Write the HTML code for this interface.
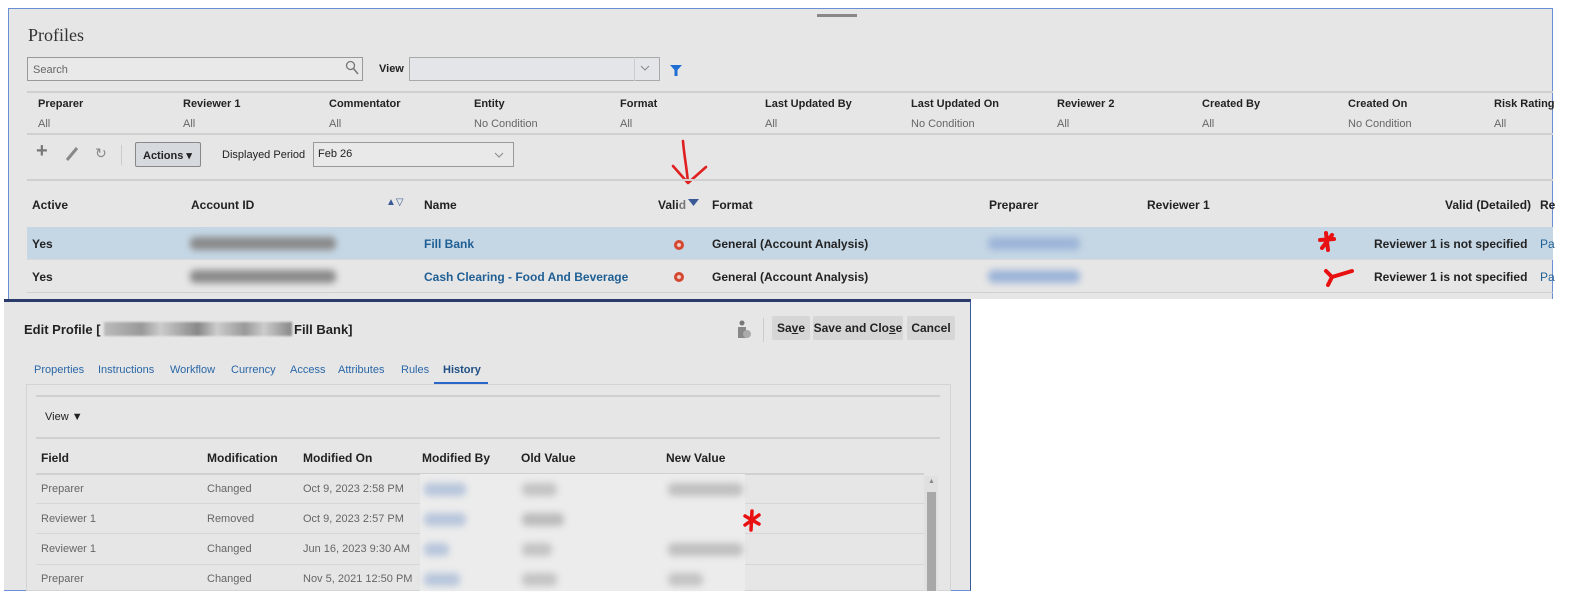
<!DOCTYPE html>
<html><head><meta charset="utf-8"><style>
*{margin:0;padding:0;box-sizing:border-box}
body{width:1573px;height:601px;background:#fff;position:relative;overflow:hidden;font-family:"Liberation Sans",sans-serif;font-size:12px;color:#222}
.a{position:absolute;white-space:nowrap}
.b{font-weight:bold;color:#222}
.g{color:#666;font-size:11px}
.lk{color:#1f5f94;font-weight:bold}
.blur{position:absolute;height:13px;border-radius:5px;filter:blur(3.5px)}
.hl{position:absolute;height:2px;background:#d0d0d0}
.btn{position:absolute;background:#d6d6d6;border-radius:2px;font-weight:bold;font-size:12px;text-align:center;line-height:24px;color:#222}
.err{position:absolute;width:10px;height:10px;border-radius:50%;background:radial-gradient(circle,#f4d0c8 0 1.5px,#d4462f 2.5px)}
</style></head><body>
<div class="a" style="left:8px;top:8px;width:1545px;height:291px;background:#e6e6e6;border:1px solid #6b8fd6;border-bottom:none"></div>
<div class="a" style="left:817px;top:14px;width:40px;height:3px;background:#888"></div>
<div class="a" style="left:28px;top:25px;font-family:'Liberation Serif',serif;font-size:18px;color:#333">Profiles</div>
<div class="a" style="left:27px;top:57px;width:336px;height:24px;border:1px solid #999;background:#e9e9e9"></div>
<div class="a g" style="left:33px;top:64px;font-size:11px">Search</div>
<svg class="a" style="left:345px;top:60px" width="14" height="16"><circle cx="5.5" cy="5.5" r="4" fill="none" stroke="#777" stroke-width="1.3"/><line x1="8.5" y1="8.5" x2="13" y2="14" stroke="#777" stroke-width="1.5"/></svg>
<div class="a b" style="left:379px;top:63px;font-size:11px">View</div>
<div class="a" style="left:409px;top:57px;width:251px;height:24px;border:1px solid #aaa;background:#e3e5e8"></div>
<div class="a" style="left:634px;top:57px;width:1px;height:24px;background:#ccc"></div>
<svg class="a" style="left:640px;top:65px" width="10" height="7"><path d="M1 1L5 5L9 1" fill="none" stroke="#888"/></svg>
<svg class="a" style="left:669px;top:64px" width="14" height="13"><path d="M1 1H13L8.5 6V12H5.5V6Z" fill="#1f6ed4"/></svg>
<div class="hl" style="left:27px;top:91px;width:1526px"></div>
<div class="a b" style="left:38px;top:98px;font-size:11px">Preparer</div><div class="a g" style="left:38px;top:118px">All</div>
<div class="a b" style="left:183px;top:98px;font-size:11px">Reviewer 1</div><div class="a g" style="left:183px;top:118px">All</div>
<div class="a b" style="left:329px;top:98px;font-size:11px">Commentator</div><div class="a g" style="left:329px;top:118px">All</div>
<div class="a b" style="left:474px;top:98px;font-size:11px">Entity</div><div class="a g" style="left:474px;top:118px">No Condition</div>
<div class="a b" style="left:620px;top:98px;font-size:11px">Format</div><div class="a g" style="left:620px;top:118px">All</div>
<div class="a b" style="left:765px;top:98px;font-size:11px">Last Updated By</div><div class="a g" style="left:765px;top:118px">All</div>
<div class="a b" style="left:911px;top:98px;font-size:11px">Last Updated On</div><div class="a g" style="left:911px;top:118px">No Condition</div>
<div class="a b" style="left:1057px;top:98px;font-size:11px">Reviewer 2</div><div class="a g" style="left:1057px;top:118px">All</div>
<div class="a b" style="left:1202px;top:98px;font-size:11px">Created By</div><div class="a g" style="left:1202px;top:118px">All</div>
<div class="a b" style="left:1348px;top:98px;font-size:11px">Created On</div><div class="a g" style="left:1348px;top:118px">No Condition</div>
<div class="a b" style="left:1494px;top:98px;font-size:11px">Risk Rating</div><div class="a g" style="left:1494px;top:118px">All</div>
<div class="hl" style="left:27px;top:133px;width:1526px"></div>
<div class="a" style="left:36px;top:141px;font-size:20px;font-weight:bold;color:#777;line-height:20px">+</div>
<svg class="a" style="left:65px;top:146px" width="14" height="16"><path d="M2 14L12 2" stroke="#888" stroke-width="3"/></svg>
<div class="a" style="left:95px;top:145px;font-size:14px;color:#888">↻</div>
<div class="a" style="left:121px;top:145px;width:1px;height:20px;background:#ccc"></div>
<div class="a" style="left:135px;top:142px;width:66px;height:25px;border:1px solid #888;background:#d6d9de;border-radius:2px"></div>
<div class="a b" style="left:143px;top:149px;font-size:11px">Actions ▾</div>
<div class="a" style="left:222px;top:149px;font-size:11px">Displayed Period</div>
<div class="a" style="left:313px;top:142px;width:201px;height:25px;border:1px solid #999;background:#e9e9e9"></div>
<div class="a" style="left:318px;top:148px;font-size:11px">Feb 26</div>
<svg class="a" style="left:494px;top:152px" width="10" height="7"><path d="M1 1L5 5L9 1" fill="none" stroke="#888"/></svg>
<svg class="a" style="left:665px;top:135px" width="50" height="55"><path d="M18 6C19 20 22 34 23 48M8 31L23 48L41 32" fill="none" stroke="#e02020" stroke-width="2.6" stroke-linecap="round" stroke-linejoin="round"/></svg>
<div class="hl" style="left:27px;top:179px;width:1526px"></div>
<div class="a b" style="left:32px;top:198px">Active</div>
<div class="a b" style="left:191px;top:198px">Account ID</div>
<div class="a" style="left:386px;top:197px;font-size:10px;color:#3a5a96">▲▽</div>
<div class="a b" style="left:424px;top:198px">Name</div>
<div class="a b" style="left:658px;top:198px">Vali<span style="color:#777">d</span></div>
<svg class="a" style="left:688px;top:199px" width="11" height="8"><path d="M0 0H11L5.5 7Z" fill="#3a5a96"/></svg>
<div class="a b" style="left:712px;top:198px">Format</div>
<div class="a b" style="left:989px;top:198px">Preparer</div>
<div class="a b" style="left:1147px;top:198px">Reviewer 1</div>
<div class="a b" style="left:1445px;top:198px">Valid (Detailed)</div>
<div class="a b" style="left:1540px;top:198px">Re</div>
<div class="a" style="left:27px;top:227px;width:1526px;height:32px;background:#c5d7e5"></div>
<div class="hl" style="left:27px;top:259px;width:1526px;height:1px;background:#d8d8d8"></div>
<div class="hl" style="left:27px;top:292px;width:1526px;height:1px"></div>
<div class="a b" style="left:32px;top:237px">Yes</div>
<div class="a b" style="left:32px;top:270px">Yes</div>
<div class="blur" style="left:190px;top:237px;width:146px;background:#8a8a8a"></div>
<div class="blur" style="left:190px;top:270px;width:146px;background:#8a8a8a"></div>
<div class="a lk" style="left:424px;top:237px">Fill Bank</div>
<div class="a lk" style="left:424px;top:270px">Cash Clearing - Food And Beverage</div>
<div class="err" style="left:674px;top:240px"></div>
<div class="err" style="left:674px;top:272px"></div>
<div class="a b" style="left:712px;top:237px">General (Account Analysis)</div>
<div class="a b" style="left:712px;top:270px">General (Account Analysis)</div>
<div class="blur" style="left:988px;top:237px;width:92px;background:#9db5d8"></div>
<div class="blur" style="left:988px;top:270px;width:92px;background:#9db5d8"></div>
<svg class="a" style="left:1318px;top:230px" width="28" height="24"><path d="M8 3L10 20M2 10L16 9M4 18L14 5" stroke="#e81010" stroke-width="4" stroke-linecap="round"/></svg>
<svg class="a" style="left:1320px;top:265px" width="36" height="24"><path d="M6 6L12 12L8 20M12 12L32 6" fill="none" stroke="#e81010" stroke-width="4" stroke-linecap="round"/></svg>
<div class="a b" style="left:1374px;top:237px">Reviewer 1 is not specified</div>
<div class="a b" style="left:1374px;top:270px">Reviewer 1 is not specified</div>
<div class="a" style="left:1540px;top:237px;color:#1f5f94">Pa</div>
<div class="a" style="left:1540px;top:270px;color:#1f5f94">Pa</div>
<div class="a" style="left:4px;top:299px;width:967px;height:292px;background:#e6e6e6;border-top:3px solid #2a3a6a;border-right:1px solid #3a5a9a;border-bottom:1px solid #6b8fd6"></div>
<div class="a b" style="left:24px;top:322px;font-size:13px">Edit Profile [</div>
<div class="a" style="left:104px;top:322px;width:188px;height:14px;background:linear-gradient(90deg,#bbb 0,#999 20%,#ccc 30%,#888 50%,#ccc 60%,#999 75%,#ccc 85%,#888 100%);filter:blur(1px)"></div>
<div class="a b" style="left:294px;top:322px;font-size:13px">Fill Bank]</div>
<svg class="a" style="left:736px;top:320px" width="16" height="20"><circle cx="6" cy="3" r="2.5" fill="#777"/><rect x="2" y="7" width="8" height="11" fill="#888"/><circle cx="11" cy="14" r="4" fill="#aaa"/></svg>
<div class="a" style="left:763px;top:318px;width:1px;height:24px;background:#ccc"></div>
<div class="btn" style="left:772px;top:316px;width:38px">Sa<u>v</u>e</div>
<div class="btn" style="left:813px;top:316px;width:90px">Save and Clo<u>s</u>e</div>
<div class="btn" style="left:907px;top:316px;width:48px">Cancel</div>
<div class="a" style="left:34px;top:364px;font-size:11px;color:#2a67a8">Properties</div>
<div class="a" style="left:98px;top:364px;font-size:11px;color:#2a67a8">Instructions</div>
<div class="a" style="left:170px;top:364px;font-size:11px;color:#2a67a8">Workflow</div>
<div class="a" style="left:231px;top:364px;font-size:11px;color:#2a67a8">Currency</div>
<div class="a" style="left:290px;top:364px;font-size:11px;color:#2a67a8">Access</div>
<div class="a" style="left:338px;top:364px;font-size:11px;color:#2a67a8">Attributes</div>
<div class="a" style="left:401px;top:364px;font-size:11px;color:#2a67a8">Rules</div>
<div class="a b" style="left:443px;top:364px;font-size:11px;color:#1f4f84">History</div>
<div class="a" style="left:434px;top:382px;width:54px;height:2px;background:#2a67c8"></div>
<div class="a" style="left:26px;top:384px;width:925px;height:207px;border:1px solid #d4d4d4"></div>
<div class="hl" style="left:36px;top:395px;width:904px"></div>
<div class="a" style="left:45px;top:411px;font-size:11px">View ▼</div>
<div class="hl" style="left:36px;top:437px;width:904px"></div>
<div class="a b" style="left:41px;top:451px">Field</div>
<div class="a b" style="left:207px;top:451px">Modification</div>
<div class="a b" style="left:303px;top:451px">Modified On</div>
<div class="a b" style="left:422px;top:451px">Modified By</div>
<div class="a b" style="left:521px;top:451px">Old Value</div>
<div class="a b" style="left:666px;top:451px">New Value</div>
<div class="hl" style="left:36px;top:473px;width:888px"></div>
<div class="a" style="left:924px;top:476px;width:14px;height:115px;background:#e0e0e0"></div>
<div class="a" style="left:927px;top:492px;width:9px;height:99px;background:#a8a8a8"></div>
<div class="a" style="left:928px;top:478px;font-size:7px;color:#888">▲</div>
<div class="hl" style="left:36px;top:503px;width:888px;height:1px;background:#d6d6d6"></div>
<div class="hl" style="left:36px;top:533px;width:888px;height:1px;background:#d6d6d6"></div>
<div class="hl" style="left:36px;top:564px;width:888px;height:1px;background:#d6d6d6"></div>
<div class="a" style="left:420px;top:474px;width:325px;height:117px;background:#ececec"></div>
<div class="a g" style="left:41px;top:483px">Preparer</div><div class="a g" style="left:207px;top:483px">Changed</div><div class="a g" style="left:303px;top:483px">Oct 9, 2023 2:58 PM</div>
<div class="a g" style="left:41px;top:513px">Reviewer 1</div><div class="a g" style="left:207px;top:513px">Removed</div><div class="a g" style="left:303px;top:513px">Oct 9, 2023 2:57 PM</div>
<div class="a g" style="left:41px;top:543px">Reviewer 1</div><div class="a g" style="left:207px;top:543px">Changed</div><div class="a g" style="left:303px;top:543px">Jun 16, 2023 9:30 AM</div>
<div class="a g" style="left:41px;top:573px">Preparer</div><div class="a g" style="left:207px;top:573px">Changed</div><div class="a g" style="left:303px;top:573px">Nov 5, 2021 12:50 PM</div>
<div class="blur" style="left:424px;top:483px;width:42px;background:#b8c6dc"></div><div class="blur" style="left:522px;top:483px;width:35px;background:#c4c4c4"></div><div class="blur" style="left:668px;top:483px;width:75px;background:#c0c0c0"></div>
<div class="blur" style="left:424px;top:513px;width:42px;background:#b8c6dc"></div><div class="blur" style="left:522px;top:513px;width:42px;background:#bcbcbc"></div>
<div class="blur" style="left:424px;top:543px;width:25px;background:#b8c6dc"></div><div class="blur" style="left:522px;top:543px;width:30px;background:#c4c4c4"></div><div class="blur" style="left:668px;top:543px;width:75px;background:#c0c0c0"></div>
<div class="blur" style="left:424px;top:573px;width:36px;background:#b8c6dc"></div><div class="blur" style="left:522px;top:573px;width:35px;background:#c4c4c4"></div><div class="blur" style="left:668px;top:573px;width:35px;background:#c4c4c4"></div>
<svg class="a" style="left:742px;top:508px" width="22" height="26"><path d="M10 3L9 22M3 8L17 16M3 17L17 7" stroke="#e81010" stroke-width="3.5" stroke-linecap="round"/></svg>
</body></html>
